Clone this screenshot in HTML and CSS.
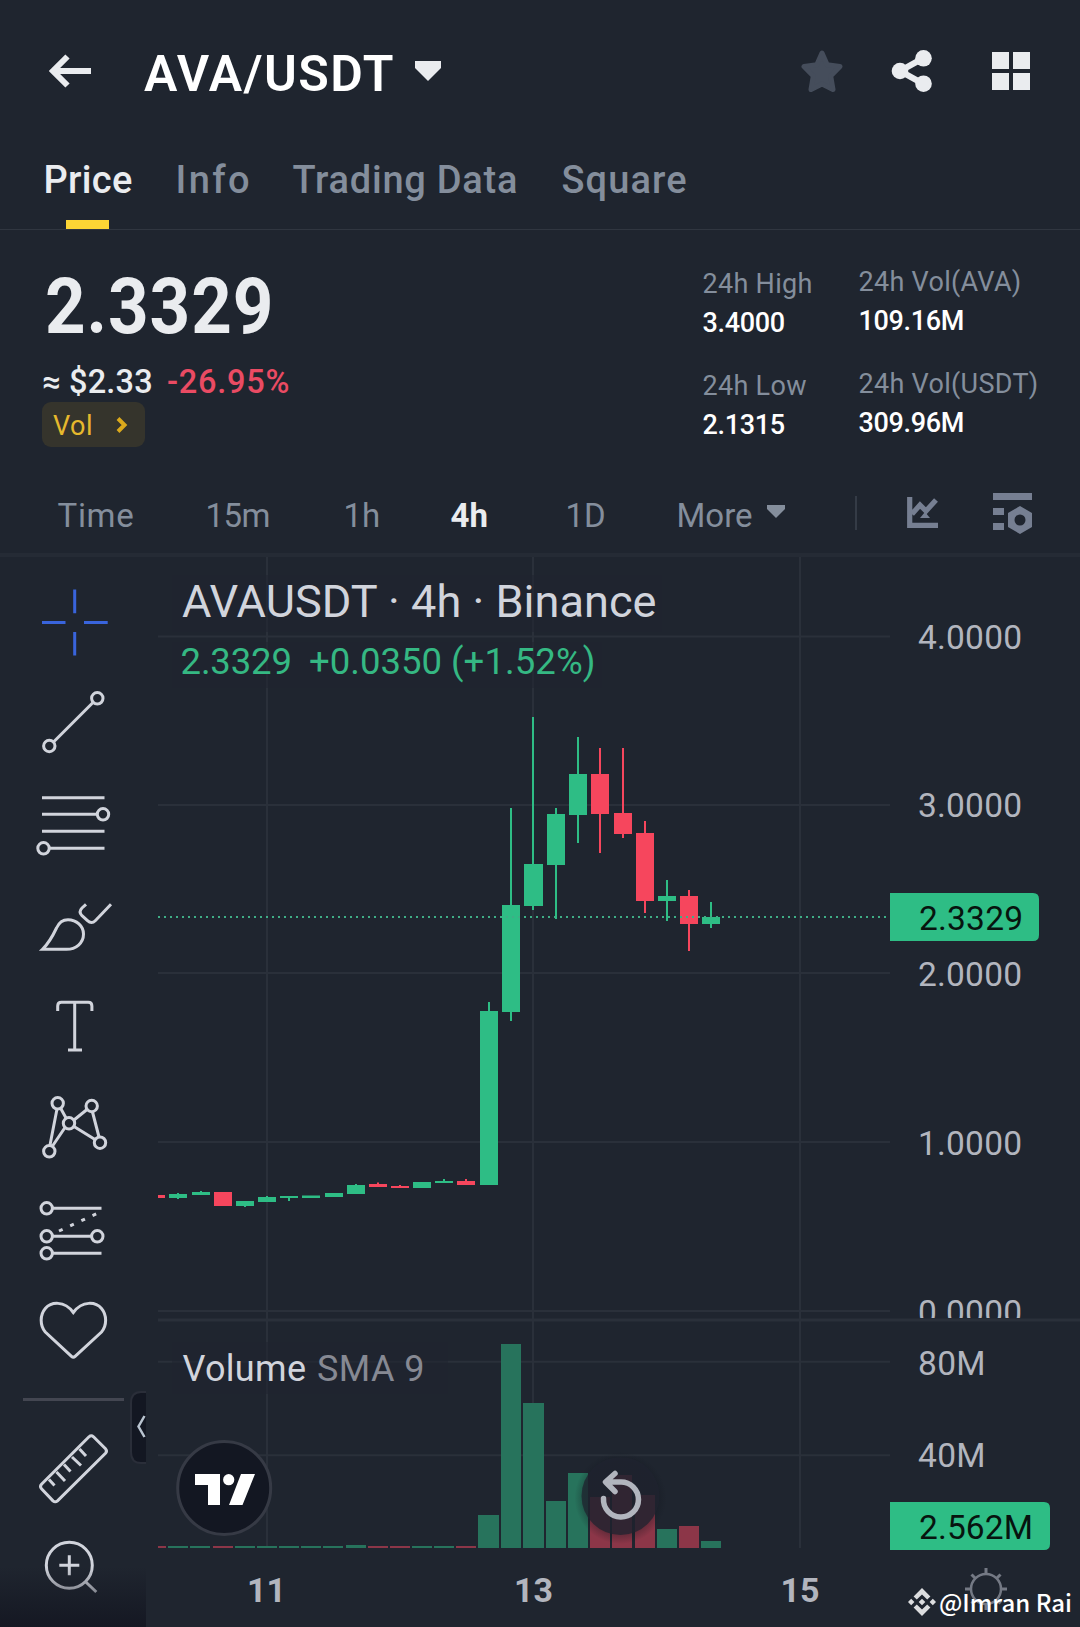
FILE: index.html
```html
<!DOCTYPE html>
<html lang="en">
<head>
<meta charset="utf-8">
<title>AVA/USDT</title>
<link rel="stylesheet" href="styles.css">
</head>
<body>
<header class="topbar">
  <svg class="back" width="44" height="36" viewBox="48 53 44 36"><path d="M91 71H54M67.500 56.500L53 71l14.500 14.500" fill="none" stroke="#eaecef" stroke-width="6"/></svg>
  <h1 class="pair">AVA/USDT</h1>
  <svg class="pair-caret" width="26" height="20" viewBox="0 0 26 20"><path d="M0 0h26v7L13 20 0 7z" fill="#eaecef"/></svg>
  <div class="actions">
    <svg width="42" height="42" viewBox="0 0 42 42"><path d="M21 3l5.200 11.800L39 16.500l-9.300 9.500L32 39.500l-11-5.600-11 5.600L12.300 26 3 16.500l12.800-1.700z" fill="#454d5b" stroke="#454d5b" stroke-width="5" stroke-linejoin="round"/></svg>
    <svg width="42" height="42" viewBox="891 50 42 42"><path d="M923.500 58L900 71l23.500 13" fill="none" stroke="#eaecef" stroke-width="6"/><g fill="#eaecef"><circle cx="923.500" cy="58.300" r="8.300"/><circle cx="900" cy="71" r="8.300"/><circle cx="923.500" cy="83.700" r="8.300"/></g></svg>
    <svg width="38" height="38" viewBox="0 0 38 38"><path d="M0 0h17v17H0zM21 0h17v17H21zM0 21h17v17H0zM21 21h17v17H21z" fill="#eaecef"/></svg>
  </div>
</header>
<nav class="tabs">
  <a class="tab active">Price</a><a class="tab info">Info</a><a class="tab">Trading Data</a><a class="tab square">Square</a>
</nav>
<section class="ticker">
  <div class="quote">
    <div class="last">2.3329</div>
    <div class="sub"><span class="fiat">≈ $2.33</span><span class="change">-26.95%</span></div>
    <div class="pill"><span>Vol</span><svg width="12" height="16" viewBox="0 0 12 16"><path d="M2 1.500L8.500 8 2 14.500" fill="none" stroke="#dba91c" stroke-width="4"/></svg></div>
  </div>
  <dl class="stats">
    <div class="stat"><dt>24h High</dt><dd>3.4000</dd></div>
    <div class="stat"><dt>24h Low</dt><dd>2.1315</dd></div>
  </dl>
  <dl class="stats volumes">
    <div class="stat"><dt>24h Vol(AVA)</dt><dd>109.16M</dd></div>
    <div class="stat"><dt>24h Vol(USDT)</dt><dd>309.96M</dd></div>
  </dl>
</section>
<nav class="frames">
  <span class="time">Time</span><span class="minutes">15m</span><span>1h</span><span class="current">4h</span><span>1D</span><span>More</span>
  <svg class="more-caret" width="18" height="13" viewBox="0 0 18 13"><path d="M0 0h18v4L9 13 0 4z" fill="#848e9c"/></svg>
  <i class="rule"></i>
  <svg class="chart-type" width="32" height="32" viewBox="0 0 32 32"><path d="M2.700 0v28.300H31M5 17l8-9 6 6 10-11" fill="none" stroke="#767f92" stroke-width="5.200"/><path d="M18 15l5 6H13z" fill="#767f92"/></svg>
  <svg class="settings" width="40" height="41" viewBox="0 0 40 41"><path d="M0 0h39v7H0zM0 15h11v7H0zM0 30h11v7H0z" fill="#767f92"/><path fill-rule="evenodd" d="M27 13l12 7v14l-12 7-12-7V20zM27 21.500a5.500 5.500 0 1 0 0 11 5.500 5.500 0 1 0 0-11z" fill="#767f92"/></svg>
</nav>
<main class="workspace">
  <aside class="toolbar">
    <svg width="146" height="116" viewBox="0 557 146 116" class="accent"><path d="M74.700 589.500v23.700M74.700 632v23.500M42 622.500h23.500M84 622.500h23.700"/></svg>
    <svg width="146" height="99" viewBox="0 673 146 99"><path d="M53.500 742l40-40"/><circle cx="97.300" cy="698.300" r="5.700"/><circle cx="49.300" cy="746" r="5.700"/></svg>
    <svg width="146" height="106" viewBox="0 772 146 106"><path d="M42 797.700h62.500M42 814.300h55M42 831.300h62.500M49.500 848.300h55"/><circle cx="103" cy="814.300" r="5.700"/><circle cx="43.500" cy="848.300" r="5.700"/></svg>
    <svg width="146" height="102" viewBox="0 878 146 102"><path d="M42.500 949.300C48 944 52.500 936.500 56.500 928c2.200-5 6-8.300 11.500-8.300 8.500 0 15.500 6.500 15.500 14.300 0 9-7.500 15.300-17 15.300zM86 904.300l-4 3.700c-2.700 2.700-2.700 5 0 7.700l5.500 5c2.500 2.300 5.500 2.300 8-.2l15.500-16.200"/></svg>
    <svg width="146" height="96" viewBox="0 980 146 96"><path d="M57.700 1011v-5q0-3.700 3.700-3.700h26.800q3.700 0 3.700 3.700v5M74.700 1002.300v47.700M68 1050h14"/></svg>
    <svg width="146" height="106" viewBox="0 1076 146 106"><path d="M60.500 1108l5.500 10M74 1120l13-10.500M92.500 1112l6.500 25M95 1139.500l-21-13M65 1127.500l-12.500 18.500M50 1145l7-36"/><circle cx="57.700" cy="1103.300" r="5.700"/><circle cx="91.700" cy="1106" r="5.700"/><circle cx="69" cy="1123.300" r="5.700"/><circle cx="49.300" cy="1151.300" r="5.700"/><circle cx="100" cy="1142.700" r="5.700"/></svg>
    <svg width="146" height="100" viewBox="0 1182 146 100"><path d="M52.500 1208.300h49M52.500 1236.300h39M52.500 1253.300h49"/><path d="M59 1231l38-17.500" stroke-dasharray="4 8.300"/><circle cx="46.700" cy="1208.300" r="5.700"/><circle cx="46.700" cy="1236.300" r="5.700"/><circle cx="97.300" cy="1236.300" r="5.700"/><circle cx="46.700" cy="1253.300" r="5.700"/></svg>
    <svg width="146" height="115" viewBox="0 1282 146 115"><path d="M73.300 1312.500c-9-12.500-22.500-10.500-28-4-5.500 6.500-5.500 17 0 23.500L71.500 1356.300q1.800 1.700 3.600 0L101.500 1332c5.500-6.500 5.500-17 0-23.500-5.500-6.500-19-8.500-28.200 4z"/></svg>
    <i class="divider"></i>
    <svg width="146" height="127" viewBox="0 1401 146 127"><path d="M89 1436.800q2.300-2 4.500 0l12 12q2 2.300 0 4.500l-48 47.500q-2.300 2-4.500 0l-11.500-12q-2-2.300 0-4.500zM49 1479.500l5.500 6M56.500 1472l8.500 9M64 1464.500l6.500 7M72 1457l9 8.500M79.500 1449l6.500 7"/></svg>
    <svg width="146" height="99" viewBox="0 1528 146 99"><circle cx="69.300" cy="1565.300" r="23"/><path d="M69.300 1555.300v20M59.300 1565.300h20M85.800 1582l10.500 10"/></svg>
    <div class="fade"></div>
    <svg class="handle" width="16" height="73" viewBox="0 0 16 73"><path d="M17 1H11Q1 1 1 12v49q0 11 10 11h6z" fill="#131722" stroke="#2a2e39" stroke-width="2"/><path d="M14.500 25L8.500 35.500l6 10.500" fill="none" stroke="#b9c4d0" stroke-width="2.500"/></svg>
  </aside>
  <svg class="chart" width="934" height="1070" viewBox="146 557 934 1070">
    <g class="grid">
      <path d="M158 636.500h732M158 805h732M158 973h732M158 1142h732M158 1311h732M158 1361.700h732M158 1455.200h732M267 557v991M533 557v991M800 557v991"/>
      <path d="M158 1320h922" stroke-width="3"/>
    </g>
    <rect x="172" y="575" width="490" height="57" class="veil"/><rect x="172" y="642" width="430" height="46" class="veil"/><rect x="172" y="1342" width="276" height="52" class="veil"/>
    <path class="vol-up" d="M168 1546h20v2h-20zM190 1546h20v2h-20zM235 1546h20v2h-20zM257 1546h20v2h-20zM279 1546h20v2h-20zM301 1546h20v2h-20zM323 1546h20v2h-20zM346 1545h20v3h-20zM412 1546h20v2h-20zM434 1546h20v2h-20zM478 1515h21v33h-21zM501 1344h20v204h-20zM523 1403h21v145h-21zM546 1501h20v47h-20zM568 1473h20v75h-20zM657 1529h20v19h-20zM701 1541h20v7h-20z"/>
    <path class="vol-down" d="M158 1546h8v2h-8zM213 1546h20v2h-20zM368 1546h20v2h-20zM390 1546h20v2h-20zM456 1546h20v2h-20zM590 1497h20v51h-20zM612 1475h20v73h-20zM635 1495h20v53h-20zM679 1526h20v22h-20z"/>
    <path class="up" d="M169 1194h18v4h-18zM177 1193h2v6h-2zM192 1192h18v3h-18zM200 1191h2v2h-2zM236 1201h18v5h-18zM244 1205h2v2h-2zM258 1197h18v5h-18zM266 1196h2v2h-2zM280 1196h18v2h-18zM288 1196h2v5h-2zM302 1195.500h18v2.500h-18zM325 1193h18v4h-18zM347 1185h18v9h-18zM355 1184h2v2h-2zM413 1182h18v6h-18zM435 1181h18v2h-18zM443 1179h2v3h-2zM480 1011h18v174h-18zM488 1002h2v10h-2zM502 905h18v107h-18zM510 808h2v213h-2zM524 864h19v42h-19zM532 717h2v193h-2zM547 814h18v51h-18zM555 808h2v111h-2zM569 774h18v41h-18zM577 737h2v106h-2zM658 896h18v5h-18zM666 880h2v41h-2zM702 917h18v7h-18zM710 902h2v26h-2z"/>
    <path class="down" d="M158 1195h7v3h-7zM214 1192h18v14h-18zM369 1184h18v3h-18zM377 1182.500h2v2h-2zM391 1186h18v2h-18zM399 1185h2v2h-2zM457 1181h18v4h-18zM465 1179h2v3h-2zM591 774h18v40h-18zM599 748h2v105h-2zM614 813h18v21h-18zM622 748h2v90h-2zM636 833h18v68h-18zM644 821h2v92h-2zM680 896h18v28h-18zM688 890h2v61h-2z"/>
    <path d="M158 917h732" stroke="#3fae86" stroke-width="2" stroke-dasharray="2 4"/>
    <text class="legend" x="182" y="617" font-size="44" textLength="474.500" lengthAdjust="spacingAndGlyphs">AVAUSDT · 4h · Binance</text>
    <g class="legend-change" font-size="36.500"><text x="180.500" y="674" textLength="111.500">2.3329</text><text x="309" y="674" textLength="133">+0.0350</text><text x="451" y="674" textLength="144.500">(+1.52%)</text></g>
    <g font-size="36"><text class="legend" x="182.500" y="1381" textLength="123.500">Volume</text><text class="legend-sub" x="317" y="1381" textLength="107.500">SMA 9</text></g>
    <clipPath id="price-pane"><rect x="890" y="557" width="190" height="761"/></clipPath>
    <g class="axis" clip-path="url(#price-pane)">
      <text x="918" y="648.500" textLength="104">4.0000</text><text x="918" y="817" textLength="104">3.0000</text><text x="918" y="985.500" textLength="104">2.0000</text><text x="918" y="1154.500" textLength="104">1.0000</text><text x="918" y="1323.500" textLength="104">0.0000</text>
    </g>
    <g class="axis"><text x="918" y="1375" textLength="67.500">80M</text><text x="918" y="1467" textLength="67.500">40M</text></g>
    <g class="tag">
      <path d="M890 893h143q6 0 6 6v36q0 6-6 6H890zM890 1502h154q6 0 6 6v36q0 6-6 6H890z"/>
      <text x="919" y="930" textLength="104">2.3329</text><text x="919" y="1539" textLength="114">2.562M</text>
    </g>
    <g class="dates"><text x="266.500" y="1602">11</text><text x="533.500" y="1602">13</text><text x="800" y="1602">15</text></g>
    <circle cx="224.200" cy="1488" r="46.500" fill="#131722" stroke="#363a45" stroke-width="3"/>
    <path fill="#fff" d="M195 1474h25v31h-12v-20h-13zM241 1474h14l-12.500 31H229z"/><circle cx="228.700" cy="1479.700" r="5.600" fill="#fff"/>
    <radialGradient id="glow"><stop offset=".8" stop-color="#10141c" stop-opacity=".3"/><stop offset="1" stop-color="#10141c" stop-opacity="0"/></radialGradient>
    <circle cx="620.500" cy="1498" r="46" fill="url(#glow)"/>
    <circle cx="620.500" cy="1496" r="39" fill="#1f232f" fill-opacity=".76"/>
    <path d="M603.500 1498.500a17.500 17.500 0 1 0 17-16.500h-13M615 1473.500l-9.500 8.500 9.500 9.500" fill="none" stroke="#b2b5be" stroke-width="5.500" stroke-linecap="round" stroke-linejoin="round"/>
    <path d="M986 1568v6M986 1604v6M965 1589h6M1001 1589h6M971.500 1574.500l4 4M996.500 1599.500l4 4M1000.500 1574.500l-4 4M975.500 1599.500l-4 4" stroke="#747984" stroke-width="3"/><circle cx="986" cy="1589" r="15" fill="none" stroke="#747984" stroke-width="2.500"/>
  </svg>
</main>
<div class="credit">
  <svg width="28" height="28" viewBox="0 0 28 28"><path fill="#dcdddf" d="M14 0l8.400 8.400-3.200 3.200L14 6.400l-5.200 5.200-3.200-3.200zM14 28l8.400-8.400-3.200-3.200L14 21.600l-5.200-5.200-3.200 3.200zM14 10.700l3.300 3.300-3.300 3.300-3.300-3.300zM3.200 10.800L6.400 14l-3.200 3.200L0 14zM24.800 10.800L28 14l-3.200 3.200-3.200-3.200z"/></svg>
  <span>@Imran Rai</span>
</div>
</body>
</html>
```
FILE: styles.css
```css
* { box-sizing: border-box; }
body { margin: 0; width: 1080px; height: 1627px; overflow: hidden; position: relative; background: #1f252f; color: #eaecef; font-family: Roboto, "Liberation Sans", sans-serif; }
svg { display: block; flex: none; }
.topbar { display: flex; align-items: center; height: 142px; padding: 0 50px 0 48px; }
.pair { margin: 0 0 0 52px; padding-top: 6px; width: 271px; font-size: 50px; font-weight: 600; line-height: 60px; letter-spacing: 1.4px; color: #fff; white-space: nowrap; }
.actions { display: flex; align-items: center; gap: 59px; margin-left: auto; }
.actions svg:first-child { margin-right: -11px; }
.tabs { display: grid; grid-template-columns: 132px 117px 269px 200px; height: 88px; padding-left: 43.5px; border-bottom: 1px solid #303640; font-size: 38px; font-weight: 500; line-height: 76px; letter-spacing: .75px; color: #848e9c; }
.tab { display: flex; flex-direction: column; white-space: nowrap; }
.tab.info { letter-spacing: 2.4px; }
.tab.square { letter-spacing: 1.1px; }
.tab.active { color: #eaecef; letter-spacing: .3px; }
.tab.active::after { content: ""; width: 43px; height: 9px; margin: 2px 0 0 22px; background: #fcd535; }
.ticker { display: grid; grid-template-columns: 661.5px 156px 1fr; height: 246px; padding: 36px 0 0 41px; }
.last { width: max-content; margin: 1px 0 0 3.5px; font-size: 77px; font-weight: 700; line-height: 80px; letter-spacing: 1px; transform: scaleX(.92); transform-origin: left; }
.sub { display: flex; gap: 14px; margin: 15px 0 0 1px; font-size: 32.5px; font-weight: 500; line-height: 40px; }
.fiat { letter-spacing: .2px; }
.change { color: #ea4b63; letter-spacing: .75px; }
.pill { display: flex; align-items: center; gap: 23px; width: 103px; height: 45px; margin: 0 0 0 1px; padding: 2px 0 0 11px; border-radius: 9px; background: #35342c; color: #e6b92d; font-size: 27px; letter-spacing: .5px; }
.pill svg { margin-top: -2px; }
.stats { display: flex; flex-direction: column; gap: 23px; margin: -2px 0 0; font-size: 27px; line-height: 40px; }
.stats.volumes { margin-top: -4px; }
dt { color: #848e9c; letter-spacing: .3px; white-space: nowrap; }
dd { margin: -1px 0 0; color: #fff; font-weight: 500; letter-spacing: -.35px; }
.frames { display: grid; grid-template-columns: 148px 138px 107px 115px 111px 90px 88px 52px 86px 40px; align-items: center; height: 81px; padding: 1px 0 0 57.5px; border-bottom: 4px solid #252b35; font-size: 33px; color: #848e9c; white-space: nowrap; }
.time { letter-spacing: .7px; }
.minutes { letter-spacing: -.5px; }
.current { color: #eaecef; font-weight: 700; }
.more-caret { margin-top: -8px; }
.chart-type { margin-top: -5px; }
.settings { margin-top: -4px; }
.rule { width: 2px; height: 34px; margin-top: -5px; background: #343b46; }
.workspace { display: grid; grid-template-columns: 146px 934px; height: 1070px; }
.toolbar { position: relative; display: flex; flex-direction: column; fill: none; stroke: #d1d4dc; stroke-width: 3; }
.accent { stroke: #3964dc; }
.divider { height: 3px; margin: 1px 22px 0 23px; background: #434651; }
.fade { position: absolute; left: 0; right: 0; bottom: 0; height: 60px; background: linear-gradient(rgba(20,23,34,0), rgba(20,23,34,.95)); }
.handle { position: absolute; right: 0; top: 834px; }
.grid { stroke: #2a303a; stroke-width: 2; fill: none; }
.veil { fill: #1f252f; opacity: .55; }
.up { fill: #2ebd85; }
.down { fill: #f6465d; }
.vol-up { fill: #27735c; }
.vol-down { fill: #8c3648; }
.legend { fill: #d1d4dc; }
.legend-sub { fill: #868993; }
.legend-change { fill: #35b883; }
.axis { fill: #b2b5be; font-size: 33.5px; }
.tag { fill: #2ebd85; font-size: 33.5px; }
.tag text { fill: #07140f; }
.dates { fill: #b2b5be; font-size: 34px; font-weight: 700; text-anchor: middle; }
.credit { position: absolute; right: 8px; bottom: 7px; display: flex; align-items: center; gap: 3px; color: #fff; font: 500 24px/36px "Noto Sans CJK SC", "Noto Sans", sans-serif; white-space: nowrap; }
```
